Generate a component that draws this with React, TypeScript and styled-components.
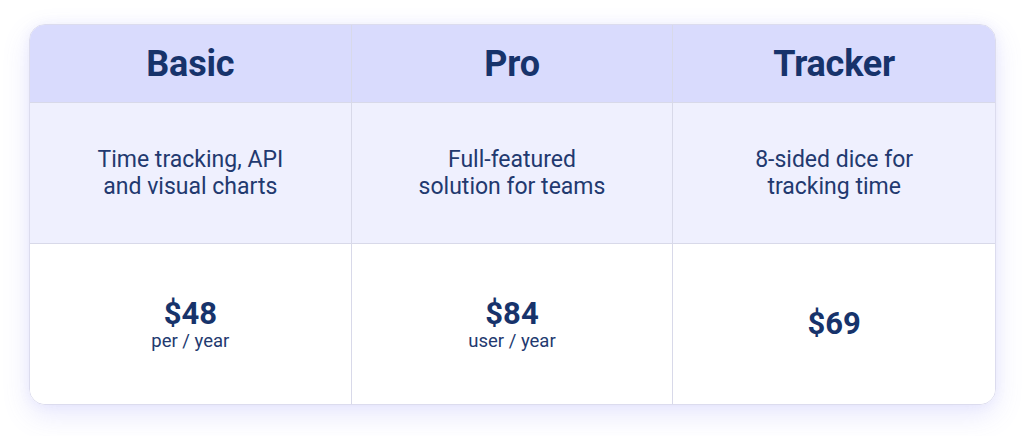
import React from "react";
import styled, { createGlobalStyle } from "styled-components";

const GlobalStyle = createGlobalStyle`
  html, body {
    margin: 0;
    padding: 0;
    background: #ffffff;
    font-family: Roboto, "Liberation Sans", sans-serif;
  }
`;

const Page = styled.div`
  padding: 24px 28px 32px 29px;
  width: 1024px;
  height: 436px;
  box-sizing: border-box;
`;

const Table = styled.div`
  display: grid;
  grid-template-columns: repeat(3, 1fr);
  grid-template-rows: 78px 141px 160px;
  border: 1px solid #dcdcee;
  border-radius: 16px;
  overflow: hidden;
  box-shadow: 0 10px 28px rgba(110, 110, 240, 0.16), 0 0 12px rgba(110, 110, 240, 0.08);
  color: #17336b;
`;

type Row = "head" | "desc" | "price";

const Cell = styled.div<{ $row: Row; $last?: boolean }>`
  display: flex;
  flex-direction: column;
  align-items: center;
  justify-content: center;
  text-align: center;
  background: ${({ $row }) =>
    $row === "head" ? "#d9dbfd" : $row === "desc" ? "#eff0fe" : "#ffffff"};
  border-right: ${({ $last }) => ($last ? "none" : "1px solid #d8d9e9")};
  border-bottom: ${({ $row }) => ($row === "price" ? "none" : "1px solid #d8d9e9")};
`;

const Title = styled.h2`
  margin: 0;
  font-size: 36px;
  font-weight: 700;
  letter-spacing: -0.2px;
`;

const Desc = styled.p`
  margin: 0;
  font-size: 23px;
  line-height: 27px;
  color: #22396f;
`;

const Price = styled.div`
  font-size: 31px;
  font-weight: 700;
  line-height: 34px;
`;

const Per = styled.div`
  font-size: 18.5px;
  line-height: 20px;
  color: #22396f;
`;

const plans = [
  { name: "Basic", desc: ["Time tracking, API", "and visual charts"], price: "$48", per: "per / year" },
  { name: "Pro", desc: ["Full-featured", "solution for teams"], price: "$84", per: "user / year" },
  { name: "Tracker", desc: ["8-sided dice for", "tracking time"], price: "$69", per: "" },
];

const App = () => {
  return (
    <Page>
      <GlobalStyle />
      <Table>
        {plans.map((p, i) => (
          <Cell key={"h" + p.name} $row="head" $last={i === 2}>
            <Title>{p.name}</Title>
          </Cell>
        ))}
        {plans.map((p, i) => (
          <Cell key={"d" + p.name} $row="desc" $last={i === 2}>
            <Desc>
              {p.desc[0]}
              <br />
              {p.desc[1]}
            </Desc>
          </Cell>
        ))}
        {plans.map((p, i) => (
          <Cell key={"p" + p.name} $row="price" $last={i === 2}>
            <Price>{p.price}</Price>
            {p.per && <Per>{p.per}</Per>}
          </Cell>
        ))}
      </Table>
    </Page>
  );
};

export default App;
